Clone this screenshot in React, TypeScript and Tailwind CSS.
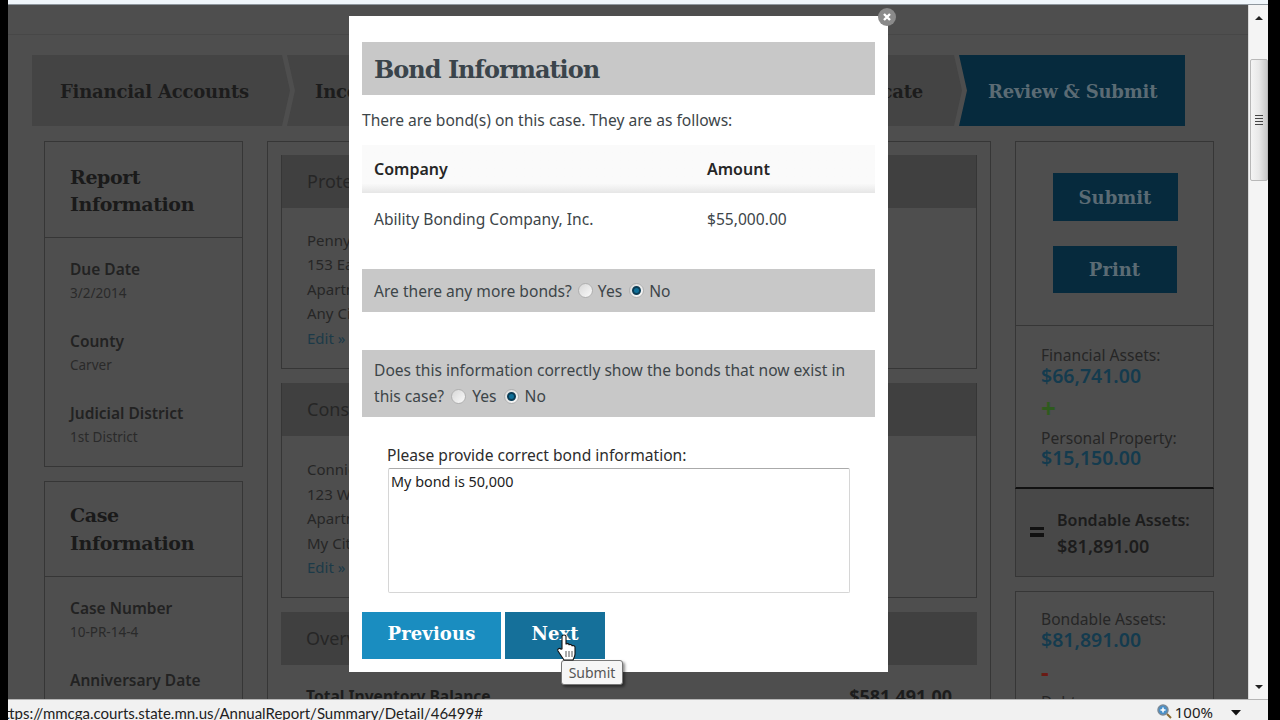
import React from "react";

const slab = "font-['DejaVu_Serif',serif] font-bold";
const sans = "font-['Noto_Sans',sans-serif]";

function Step({ label, cls, clip }: { label: string; cls: string; clip: string }) {
  return (
    <div className={`h-[71px] flex items-center pt-[2px] ${slab} text-[18px] tracking-[-0.2px] ${cls} ${clip}`}>
      {label}
    </div>
  );
}

function Info({ label, value }: { label: string; value: string }) {
  return (
    <div className="mb-[24px]">
      <div className="text-[15.5px] font-semibold leading-[24px] text-[#222]">{label}</div>
      <div className="pt-[1px] text-[13.5px] leading-[23px] text-[#2a2a2a]">{value}</div>
    </div>
  );
}

function Panel({ head, lines, h, pad }: { head: string; lines: string[]; h: string; pad: string }) {
  return (
    <div className={`border border-[#363636] border-t-0 ${h} mb-[14px]`}>
      <div className="h-[53px] bg-[#404040] flex items-center pl-[25px] text-[18px] text-[#262626]">{head}</div>
      <div className={`pl-[25px] ${pad} text-[15px] leading-[24.5px] text-[#262626]`}>
        {lines.map((l) => (
          <div key={l}>{l}</div>
        ))}
        <div className="text-[#1c3a48]">Edit »</div>
      </div>
    </div>
  );
}

function Radio({ on, cls }: { on?: boolean; cls: string }) {
  return (
    <span className={`inline-flex w-[15px] h-[15px] rounded-full border border-[#b0b0b0] bg-gradient-to-br from-[#d8d8d8] to-[#fafafa] items-center justify-center align-middle mb-[3px] ${cls}`}>
      {on && <span className="w-[9px] h-[9px] rounded-full bg-[#0f7099] border-[2px] border-[#0b3c55]" />}
    </span>
  );
}

export default function App() {
  return (
    <div className={`relative w-[1280px] h-[720px] overflow-hidden bg-black ${sans}`}>
      <div className="h-[5px] ml-[8px] mr-[12px] bg-[#f0f6fb] border-b border-[#8f979e]" />
      <div className="flex h-[694px]">
        <div className="w-[8px] shrink-0 bg-black" />
        <main className="w-[1240px] shrink-0 bg-[#4e4e4e] overflow-hidden">
          <div className="h-[30px] border-b border-[#474747]" />
          <div className="flex pt-[20px] pl-[24px]">
            <Step label="Financial Accounts" cls="w-[258px] pl-[28px] bg-[#444444] text-[#1c1c1c]" clip="[clip-path:polygon(0_0,250px_0,258px_50%,250px_100%,0_100%)]" />
            <Step label="Income" cls="w-[340px] -ml-[3px] pl-[28px] bg-[#444444] text-[#1c1c1c]" clip="[clip-path:polygon(0_0,100%_0,100%_100%,0_100%,8px_50%)]" />
            <Step label="Certificate" cls="w-[335px] justify-end pr-[39px] bg-[#444444] text-[#1c1c1c]" clip="[clip-path:polygon(0_0,327px_0,335px_50%,327px_100%,0_100%)]" />
            <Step label="Review & Submit" cls="w-[226px] -ml-[3px] pl-[29px] bg-[#062a3d] text-[#5b6b74]" clip="[clip-path:polygon(0_0,100%_0,100%_100%,0_100%,8px_50%)]" />
          </div>
          <div className="flex pl-[36px] pt-[15px] items-start">
            <aside className="w-[199px] shrink-0">
              <section className="border border-[#363636] h-[326px]">
                <div className={`h-[96px] border-b border-[#363636] pt-[22px] pl-[25px] ${slab} text-[19px] leading-[27px] tracking-[-0.4px] text-[#1a1a1a]`}>
                  Report<br />Information
                </div>
                <div className="pl-[25px] pt-[19px]">
                  <Info label="Due Date" value="3/2/2014" />
                  <Info label="County" value="Carver" />
                  <Info label="Judicial District" value="1st District" />
                </div>
              </section>
              <section className="border border-[#363636] mt-[14px] h-[300px]">
                <div className={`h-[95px] border-b border-[#363636] pt-[19px] pl-[25px] ${slab} text-[19px] leading-[28px] tracking-[-0.4px] text-[#1a1a1a]`}>
                  Case<br />Information
                </div>
                <div className="pl-[25px] pt-[19px]">
                  <Info label="Case Number" value="10-PR-14-4" />
                  <Info label="Anniversary Date" value="1/1/14" />
                </div>
              </section>
            </aside>
            <div className="w-[724px] shrink-0 ml-[24px] border border-[#363636] h-[640px] pt-[13px] px-[13px]">
              <Panel head="Protected Person" h="h-[214px]" pad="pt-[19.5px]" lines={["Penny Smith", "153 East Street", "Apartment 2", "Any City, MN 55555"]} />
              <Panel head="Conservator" h="h-[215px]" pad="pt-[21px]" lines={["Connie Jones", "123 West Street", "Apartment 1", "My City, MN 55555"]} />
              <div className="h-[53px] bg-[#404040] flex items-center pl-[25px] text-[18px] text-[#262626]">Overview</div>
              <div className="flex justify-between items-center pt-[18px] pl-[25px] pr-[25px] text-[15.6px] font-bold text-[#1c1c1c]">
                <span>Total Inventory Balance</span>
                <span className="text-[18px]">$581,491.00</span>
              </div>
            </div>
            <aside className="w-[199px] shrink-0 ml-[24px]">
              <section className="border border-[#363636] h-[185px] flex flex-col items-center pt-[31px]">
                <div className={`w-[125px] h-[48px] ml-[1px] bg-[#062a3d] flex items-center justify-center ${slab} text-[18px] text-[#5b6b74]`}>Submit</div>
                <div className={`w-[124px] h-[47px] mt-[25px] bg-[#062a3d] flex items-center justify-center ${slab} text-[18px] text-[#5b6b74]`}>Print</div>
              </section>
              <section className="border-x border-[#363636] border-b-[2px] border-b-[#111] h-[163px] pl-[25px] pt-[18px]">
                <div className="text-[15.6px] leading-[22px] text-[#262626]">Financial Assets:</div>
                <div className="-mt-[1px] text-[19.5px] font-semibold leading-[21px] text-[#143b4e]">$66,741.00</div>
                <div className="mt-[3px] text-[26px] font-bold leading-[38px] text-[#2f5a1e]">+</div>
                <div className="text-[15.6px] leading-[22px] text-[#262626]">Personal Property:</div>
                <div className="-mt-[1px] text-[19.5px] font-semibold leading-[19px] text-[#143b4e]">$15,150.00</div>
              </section>
              <section className="border-x border-b border-[#363636] h-[88px] bg-[#484848] flex items-center pl-[14px]">
                <span className="w-[27px] flex flex-col gap-[3px] mt-[-2px]">
                  <span className="block w-[14px] h-[3px] bg-[#111]" />
                  <span className="block w-[14px] h-[4px] bg-[#111]" />
                </span>
                <div>
                  <div className="text-[16px] font-semibold leading-[26px] text-[#1c1c1c]">Bondable Assets:</div>
                  <div className="text-[18px] font-semibold leading-[26px] text-[#1c1c1c]">$81,891.00</div>
                </div>
              </section>
              <section className="border border-[#363636] mt-[14px] h-[200px] pl-[25px] pt-[16px]">
                <div className="text-[15.6px] leading-[22px] text-[#262626]">Bondable Assets:</div>
                <div className="-mt-[1px] text-[19.5px] font-semibold leading-[21px] text-[#143b4e]">$81,891.00</div>
                <div className="mt-[3px] text-[24px] font-bold leading-[38px] text-[#6a1a14]">-</div>
                <div className="text-[15.6px] leading-[22px] text-[#262626]">Debt:</div>
              </section>
            </aside>
          </div>
        </main>
        <div className="w-[20px] shrink-0 bg-[#f4f4f4] border-l border-[#d8d8d8] flex flex-col items-center">
          <svg width="10" height="6" viewBox="0 0 10 6" className="mt-[10px]"><path d="M1 5 L5 1 L9 5Z" fill="#222" /></svg>
          <div className="mt-[38px] w-[18px] h-[122px] rounded-[2px] border border-[#b8b8b8] bg-gradient-to-r from-[#f4f4f4] via-[#e8e8e8] to-[#c8c8c8] flex flex-col items-center justify-center gap-[2px]">
            <span className="w-[8px] h-[1px] bg-[#444]" />
            <span className="w-[8px] h-[1px] bg-[#444]" />
            <span className="w-[8px] h-[1px] bg-[#444]" />
            <span className="w-[8px] h-[1px] bg-[#444]" />
          </div>
          <svg width="10" height="6" viewBox="0 0 10 6" className="mt-auto mb-[9px]"><path d="M1 1 L5 5 L9 1Z" fill="#222" /></svg>
        </div>
        <div className="w-[12px] shrink-0 bg-black" />
      </div>
      <footer className="ml-[8px] mr-[12px] h-[21px] bg-[#f1f1f1] border-t border-[#b5b5b5] flex items-center justify-between overflow-hidden pt-[5px] text-[#222]">
        <span className="font-['Lato',sans-serif] text-[15px] -ml-[12px] pt-[1px] whitespace-nowrap">https://mmcga.courts.state.mn.us/AnnualReport/Summary/Detail/46499#</span>
        <div className="flex items-center pr-[26px]">
          <svg width="16" height="16" viewBox="0 0 16 16" className="mr-[3px] -mt-[4px]">
            <circle cx="7" cy="7" r="5" fill="#4a90c8" stroke="#7a8a98" strokeWidth="1.5" />
            <path d="M7 4.5v5M4.5 7h5" stroke="#fff" strokeWidth="1.5" />
            <path d="M11 11l4 4" stroke="#8a6a30" strokeWidth="2" />
          </svg>
          <span className="text-[15px]">100%</span>
          <svg width="12" height="6" viewBox="0 0 12 6" className="ml-[17px]"><path d="M1 0 L6 5.5 L11 0Z" fill="#111" /></svg>
        </div>
      </footer>

      {/* modal */}
      <div className="absolute left-[349px] top-[16px] w-[539px] h-[656px] bg-white px-[13px] pt-[26px] text-[#3d4549] text-[15.6px]">
        <div className={`h-[53px] bg-[#c8c8c8] flex items-center pl-[12px] pt-[3px] ${slab} text-[24px] tracking-[-1px] text-[#3a444b]`}>Bond Information</div>
        <p className="h-[50px] flex items-center pt-[2px]">There are bond(s) on this case. They are as follows:</p>
        <div className="h-[48px] bg-gradient-to-b from-[#fafafa] from-80% to-[#e6e6e6] flex items-center pl-[12px] font-semibold text-[16px] text-[#262626]">
          <span className="w-[333px]">Company</span>
          <span>Amount</span>
        </div>
        <div className="h-[51px] flex items-center pl-[12px] pt-[2px]">
          <span className="w-[333px]">Ability Bonding Company, Inc.</span>
          <span>$55,000.00</span>
        </div>
        <div className="mt-[25px] h-[43px] bg-[#c8c8c8] flex items-center pl-[12px] pt-[2px] gap-[4px]">
          Are there any more bonds? <Radio cls="ml-[2px] mr-[1px]" /> Yes <Radio on cls="ml-[3px] mr-[1px]" /> No
        </div>
        <div className="mt-[38px] h-[67px] bg-[#c8c8c8] px-[12px] pt-[7px] leading-[26px]">
          Does this information correctly show the bonds that now exist in<br />
          this case? <Radio cls="ml-[3px] mr-[2px]" /> Yes <Radio on cls="ml-[3px] mr-[2px]" /> No
        </div>
        <div className="pl-[25px] pt-[25px] leading-[26px] text-[#2c2c2c]">Please provide correct bond information:</div>
        <div className="ml-[26px] w-[462px] h-[125px] border border-[#d6d6d6] border-t-[#aaaaaa] rounded-[2px] pl-[2px] pt-[3px] text-[14.4px] leading-[20px] text-[#222]">My bond is 50,000</div>
        <div className="flex mt-[19px] gap-[4px]">
          <div className={`w-[139px] h-[47px] pb-[4px] bg-[#1a8dc0] flex items-center justify-center text-white ${slab} text-[18px] tracking-[0.1px]`}>Previous</div>
          <div className={`w-[100px] h-[47px] pb-[4px] bg-[#15709a] flex items-center justify-center text-white ${slab} text-[18px]`}>Next</div>
        </div>
      </div>
      {/* close */}
      <div className="absolute left-[878px] top-[8px] w-[18px] h-[18px] rounded-full bg-[#8a8a8a] flex items-center justify-center">
        <svg width="10" height="10" viewBox="0 0 10 10"><path d="M2 2l6 6M8 2l-6 6" stroke="#fff" strokeWidth="2.4" /></svg>
      </div>
      {/* tooltip */}
      <div className="absolute left-[561px] top-[660px] w-[62px] h-[25px] bg-[#f6f6f6] border border-[#777] rounded-[3px] shadow-[2px_2px_3px_rgba(0,0,0,0.45)] flex items-center justify-center text-[14px] text-[#555]">Submit</div>
      {/* cursor */}
      <svg className="absolute left-[556px] top-[634px]" width="21" height="28" viewBox="0 0 21 28">
        <path d="M6 15V2.5c0-2 4-2 4 0V10c1.3-.8 3-.4 3 .8 1.2-.6 3-.2 3 1 1.2-.4 3 .1 3 1.4V20c0 2-1 3.5-2 6H8L2 17c-1.2-2 1.4-3.6 3-1.8Z" fill="#fff" stroke="#111" strokeWidth="1.1" strokeLinejoin="round" />
        <path d="M10 17v6M13 17v6M16 17v6" stroke="#444" strokeWidth="0.9" />
      </svg>
    </div>
  );
}
